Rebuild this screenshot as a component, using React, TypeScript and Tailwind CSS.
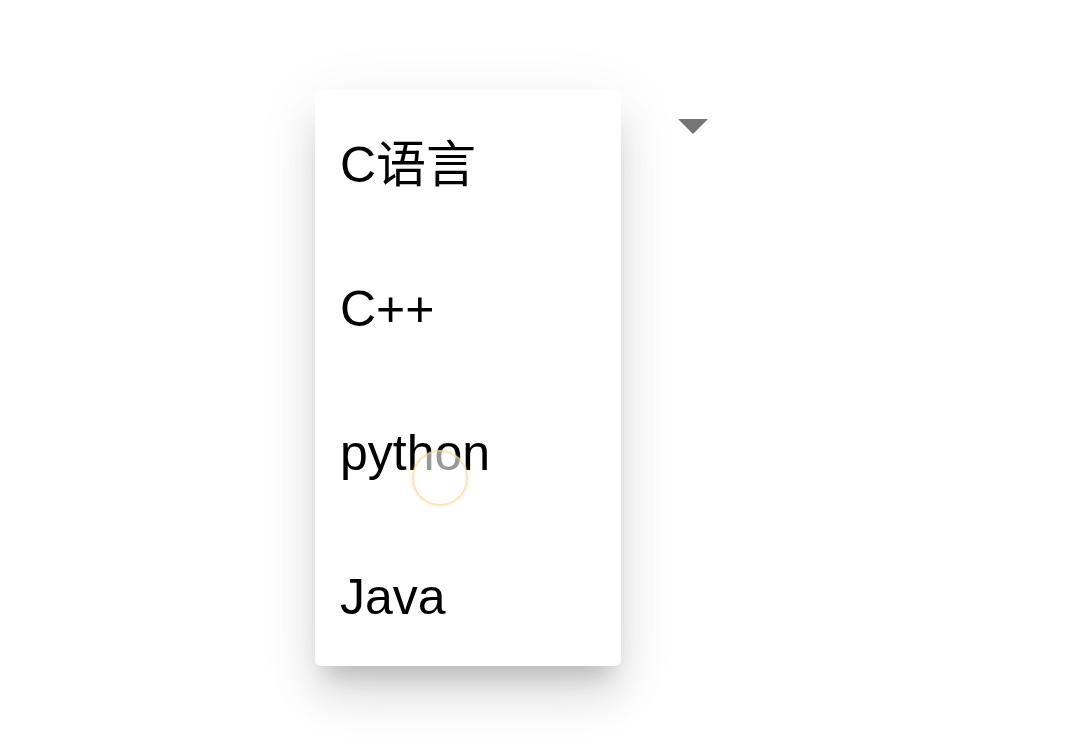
const languages = ["C语言", "C++", "python", "Java"];

export default function App() {
  return (
    <div
      className="relative w-[1080px] h-[756px] overflow-hidden bg-white"
      style={{ fontFamily: '"Liberation Sans", "Noto Sans CJK SC", sans-serif' }}
    >
      {/* select field underneath the open menu */}
      <div className="pl-[315px] pt-[119px]">
        <div className="flex w-[393px] justify-end">
          <svg width="30" height="15" viewBox="0 0 30 15" className="block">
            <path d="M0 0 L30 0 L15 15 Z" fill="#757575" />
          </svg>
        </div>
      </div>

      {/* popup menu */}
      <div className="absolute left-[315px] top-[90px] w-[306px] rounded-[5px] bg-white shadow-[0_20px_22px_-10px_rgba(0,0,0,0.17),0_34px_48px_0px_rgba(0,0,0,0.09),0_12px_64px_6px_rgba(0,0,0,0.06)]">
        <ul className="flex flex-col">
          {languages.map((lang) => (
            <li
              key={lang}
              className="flex h-[144px] items-center px-[25px] pt-[6px] text-[50px] leading-none text-black"
            >
              {lang}
            </li>
          ))}
        </ul>
      </div>

      {/* touch indicator */}
      <div className="absolute left-[412px] top-[450px] h-[56px] w-[56px] rounded-full border-2 border-[rgba(245,205,130,0.55)] bg-[rgba(255,255,255,0.6)] shadow-[0_0_3px_rgba(245,200,110,0.45)]" />
    </div>
  );
}
